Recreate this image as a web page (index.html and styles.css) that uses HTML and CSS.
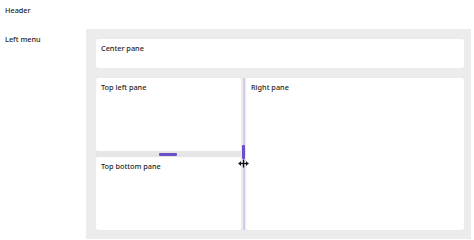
FILE: index.html
```html
<!DOCTYPE html>
<html>
<head>
<meta charset="utf-8">
<link rel="stylesheet" href="styles.css">
</head>
<body>
<div class="app">
  <header class="header">Header</header>
  <div class="body">
    <nav class="menu">Left menu</nav>
    <main class="main">
      <section class="pane center">Center pane</section>
      <div class="lower">
        <div class="leftcol">
          <section class="pane tl">Top left pane</section>
          <div class="hsplit"><span class="hhandle"></span></div>
          <section class="pane tb">Top bottom pane</section>
        </div>
        <div class="vsplit">
          <span class="vline"></span>
          <span class="vhandle"></span>
          <svg class="cursor" width="11" height="9" viewBox="0 0 11 9">
            <path d="M5.5 0.5v8" stroke="#111" stroke-width="1.4"/>
            <path d="M0.5 4.5h10" stroke="#111" stroke-width="1.2"/>
            <path d="M0.5 4.5l2.5-2.5v5z M10.5 4.5l-2.5-2.5v5z" fill="#111"/>
          </svg>
        </div>
        <section class="pane right">Right pane</section>
      </div>
    </main>
  </div>
</div>
</body>
</html>
```

FILE: styles.css
```css
* { box-sizing: border-box; }
html, body { margin: 0; padding: 0; background: #fff; }
body {
  font-family: "Noto Sans", "Open Sans", sans-serif;
  font-size: 7.3px;
  font-weight: 500;
  color: #1e1e1e;
}
.app {
  width: 474px;
  height: 240px;
  display: flex;
  flex-direction: column;
}
.header {
  height: 29px;
  padding: 5px 5px;
  line-height: 11px;
}
.body {
  flex: 1;
  display: flex;
}
.menu {
  width: 86px;
  padding: 5px 5px;
  line-height: 11px;
}
.main {
  width: 385px;
  height: 210px;
  background: #ececec;
  padding: 10px 7px 9px 10px;
  display: flex;
  flex-direction: column;
  gap: 10px;
}
.pane {
  background: #fff;
  border-radius: 2px;
  box-shadow: 0 0 1px rgba(0,0,0,0.08);
  padding: 4px 5px;
  line-height: 11px;
}
.center { height: 29px; }
.lower {
  flex: 1;
  display: flex;
}
.leftcol {
  width: 145px;
  display: flex;
  flex-direction: column;
}
.tl { height: 73px; }
.hsplit {
  height: 6px;
  background: #e6e6e6;
  position: relative;
  display: flex;
  align-items: center;
  padding-left: 63px;
}
.hhandle {
  width: 18px;
  height: 3px;
  background: #6b4fc9;
  border-radius: 1px;
}
.tb { flex: 1; }
.vsplit {
  width: 5px;
  position: relative;
  display: flex;
  justify-content: center;
}
.vline {
  width: 2px;
  background: #d3cdeb;
}
.vhandle {
  position: absolute;
  left: 1px;
  top: 67px;
  width: 3px;
  height: 14px;
  background: #6b4fc9;
  border-radius: 1px;
}
.cursor {
  position: absolute;
  left: -3px;
  top: 81px;
}
.right { flex: 1; }
```
